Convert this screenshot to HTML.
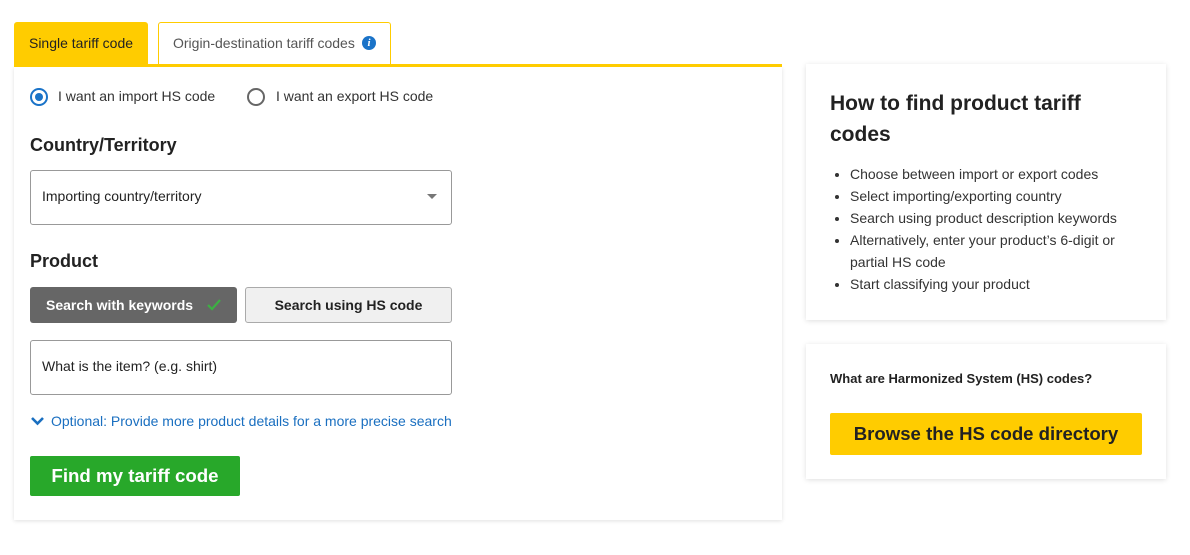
<!DOCTYPE html>
<html><head><style>
body{margin:0;width:1190px;height:555px;background:#fff;font-family:"Liberation Sans",Arial,sans-serif;color:#222;position:relative;overflow:hidden}
.a{position:absolute}
.tab1{left:14px;top:22px;width:134px;height:44px;background:#ffcc00;border-radius:3px 3px 0 0;font-size:14px;line-height:42px;text-align:center;color:#222}
.tab2{left:158px;top:22px;width:233px;height:42px;border:1px solid #ffcc00;border-bottom:none;border-radius:3px 3px 0 0;box-sizing:border-box;font-size:14px;line-height:40px;color:#555;padding-left:14px}
.line{left:14px;top:64px;width:768px;height:3px;background:#ffcc00}
.panel{left:14px;top:67px;width:768px;height:453px;background:#fff;box-shadow:0 1px 4px rgba(0,0,0,.12)}
.radio{width:14px;height:14px;border-radius:50%;border:2px solid #666;}
.t14{font-size:14px}
.box{border:1px solid #999;border-radius:3px;box-sizing:border-box;background:#fff}
.card{background:#fff;box-shadow:0 1px 5px rgba(0,0,0,.13)}
</style></head><body>
<div class="a tab1">Single tariff code</div>
<div class="a tab2">Origin-destination tariff codes</div>
<div class="a" style="left:362px;top:36px;width:14px;height:14px;border-radius:50%;background:#1a73c8;color:#fff;font:bold italic 11px/14px 'Liberation Serif',serif;text-align:center">i</div>
<div class="a panel"></div>
<div class="a line"></div>

<div class="a radio" style="left:30px;top:88px;border-color:#1a73c8"><div style="width:8px;height:8px;border-radius:50%;background:#1a73c8;margin:3px"></div></div>
<div class="a t14" style="left:58px;top:88px;color:#333">I want an import HS code</div>
<div class="a radio" style="left:247px;top:88px"></div>
<div class="a t14" style="left:276px;top:88px;color:#333">I want an export HS code</div>

<div class="a" style="left:30px;top:135px;font-size:18px;font-weight:bold">Country/Territory</div>
<div class="a box" style="left:30px;top:170px;width:422px;height:55px"></div>
<div class="a t14" style="left:42px;top:188px">Importing country/territory</div>
<div class="a" style="left:427px;top:194px;width:0;height:0;border-left:5px solid transparent;border-right:5px solid transparent;border-top:5px solid #777"></div>

<div class="a" style="left:30px;top:251px;font-size:18px;font-weight:bold">Product</div>
<div class="a" style="left:30px;top:287px;width:207px;height:36px;background:#666;border-radius:3px;color:#fff;font-size:14px;font-weight:bold;line-height:36px;padding-left:16px;box-sizing:border-box">Search with keywords
<svg width="16" height="14" viewBox="0 0 16 14" style="position:absolute;left:176px;top:11px"><path d="M2 7l4 4 8-9" stroke="#3cb043" stroke-width="2.2" fill="none"/></svg></div>
<div class="a" style="left:245px;top:287px;width:207px;height:36px;background:#f0f0f0;border:1px solid #aaa;border-radius:3px;box-sizing:border-box;font-size:14px;font-weight:bold;line-height:34px;text-align:center;color:#222">Search using HS code</div>

<div class="a box" style="left:30px;top:340px;width:422px;height:55px"></div>
<div class="a t14" style="left:42px;top:358px">What is the item? (e.g. shirt)</div>

<svg class="a" style="left:30px;top:415px" width="15" height="12" viewBox="0 0 15 12"><path d="M2 3l5.5 5.5L13 3" stroke="#1a6fc0" stroke-width="2.6" fill="none"/></svg>
<div class="a t14" style="left:51px;top:413px;color:#1a6fc0">Optional: Provide more product details for a more precise search</div>

<div class="a" style="left:30px;top:456px;width:210px;height:40px;background:#28a82a;border-radius:2px;color:#fff;font-size:18.7px;font-weight:bold;line-height:40px;text-align:center">Find my tariff code</div>

<div class="a card" style="left:806px;top:64px;width:360px;height:256px"></div>
<div class="a" style="left:830px;top:88px;font-size:21px;font-weight:bold;line-height:31px;width:300px">How to find product tariff codes</div>
<ul class="a" style="left:830px;top:163px;margin:0;padding-left:20px;font-size:14px;line-height:22px;color:#333;width:300px">
<li>Choose between import or export codes</li>
<li>Select importing/exporting country</li>
<li>Search using product description keywords</li>
<li>Alternatively, enter your product’s 6-digit or partial HS code</li>
<li>Start classifying your product</li>
</ul>

<div class="a card" style="left:806px;top:344px;width:360px;height:135px"></div>
<div class="a" style="left:830px;top:371px;font-size:13px;font-weight:bold">What are Harmonized System (HS) codes?</div>
<div class="a" style="left:830px;top:413px;width:312px;height:42px;background:#ffcc00;border-radius:2px;font-size:18.6px;font-weight:bold;line-height:42px;text-align:center;color:#222">Browse the HS code directory</div>
</body></html>
